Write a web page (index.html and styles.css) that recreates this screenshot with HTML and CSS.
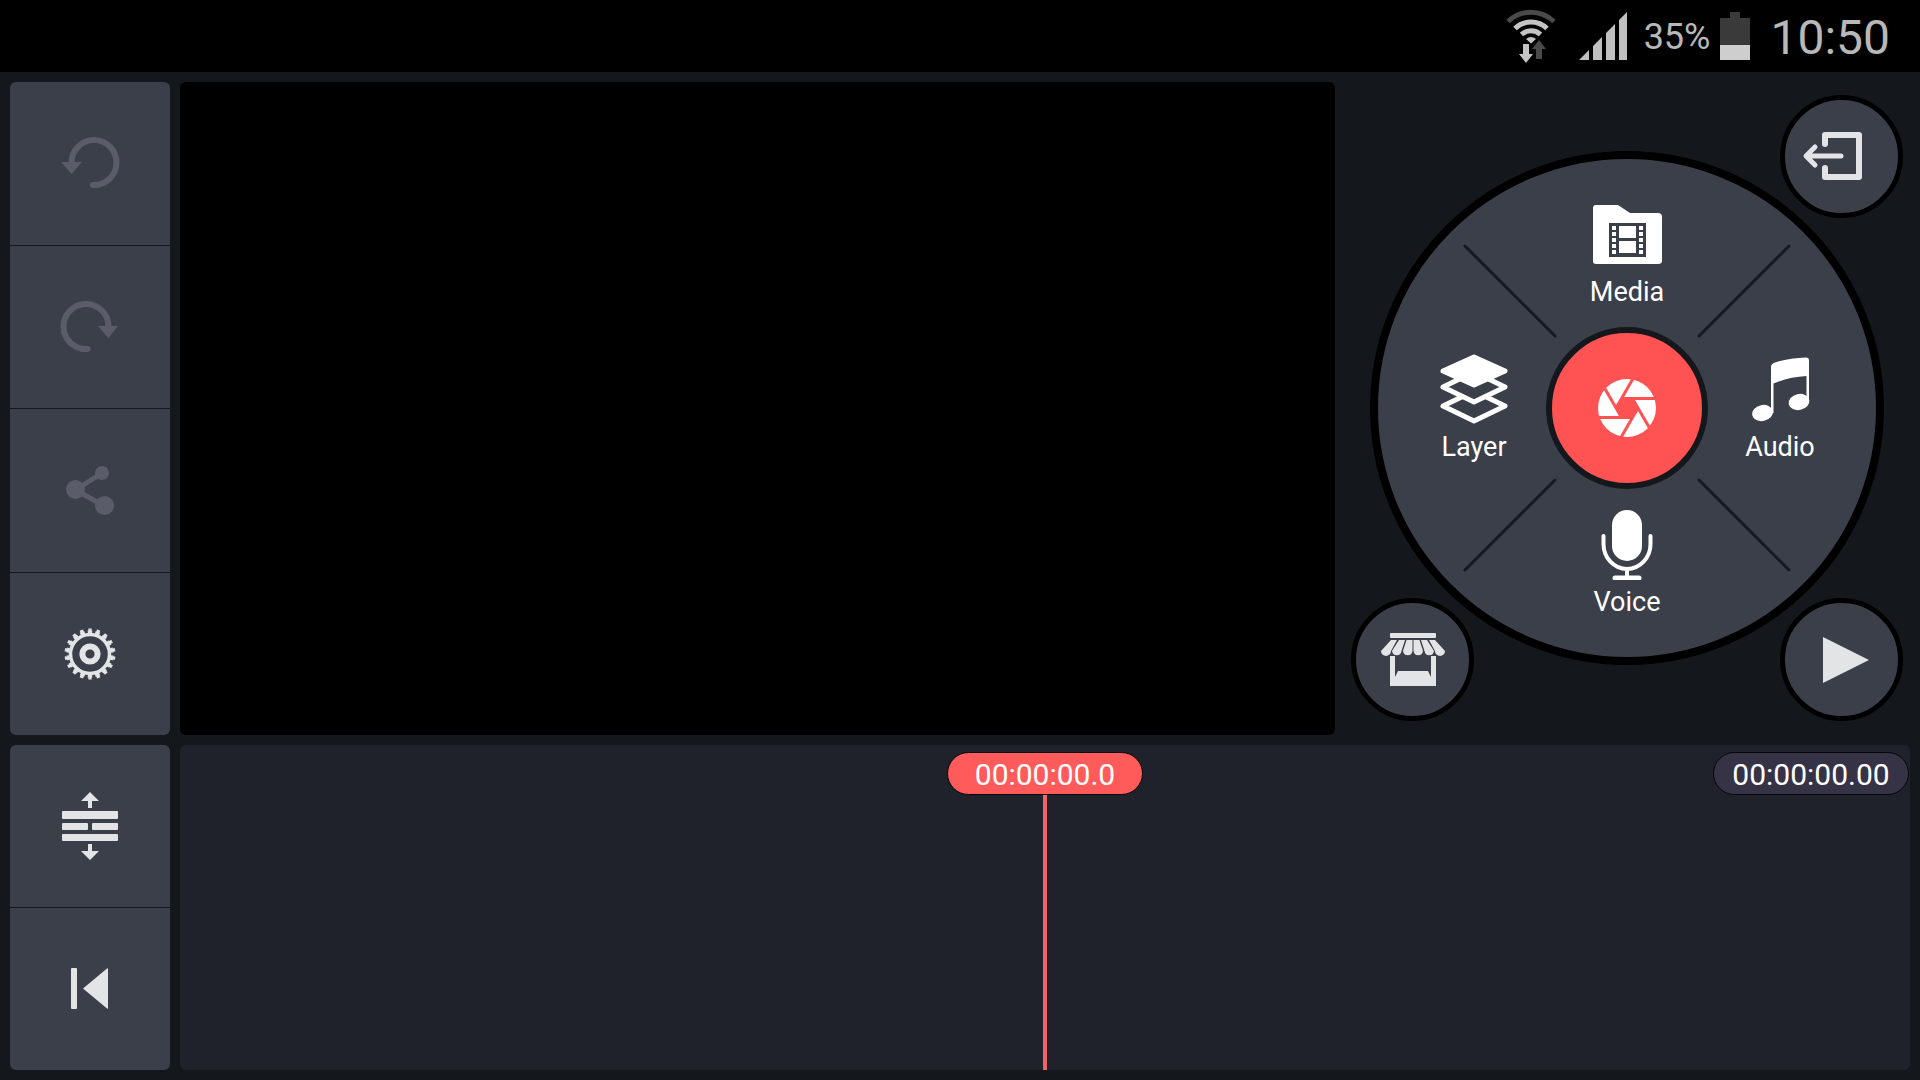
FILE: index.html
```html
<!DOCTYPE html>
<html lang="en">
<head>
  <meta charset="UTF-8">
  <meta name="viewport" content="width=device-width, initial-scale=1.0">
  <title>Video Editor</title>
  <link rel="stylesheet" href="styles.css">
</head>
<body>
  <header class="status-bar">
    <svg class="wifi" width="50" height="54" viewBox="0 0 50 54" fill="none" stroke-width="5">
      <path d="M2 12.5A33 33 0 0 1 48 12.5" stroke="#4a4a4a"/>
      <path d="M9 19.5A23 23 0 0 1 41 19.5M15.5 25.5A14 14 0 0 1 34.5 25.5" stroke="#c4c4c4"/>
      <path d="M20 30Q25 26 30 30L25 34.5ZM17 35H23V45H27L20 54L13 45H17Z" fill="#c4c4c4"/>
      <path d="M33 31L40 40H36V50H30V40H26Z" fill="#4a4a4a"/>
    </svg>
    <svg class="signal" width="48" height="48" viewBox="0 0 48 48" fill="#c0c0c0">
      <path d="M0 48L10 38V48ZM14 34L23 25V48H14ZM27 21L36 12V48H27ZM40 8L48 0V48H40Z"/>
    </svg>
    <span class="battery-level">35%</span>
    <svg class="battery" width="30" height="48" viewBox="0 0 30 48">
      <path d="M10 0H20V6H30V33H0V6H10Z" fill="#3a3a3a"/>
      <path d="M0 33H30V48H0Z" fill="#cecece"/>
    </svg>
    <time class="clock">10:50</time>
  </header>

  <main class="editor">
    <nav class="tools" aria-label="Project">
      <button class="tool" aria-label="Undo" disabled>
        <svg width="60" height="60" viewBox="0 0 60 60">
          <path d="M33 52A22.5 22.5 0 1 0 11.5 30" fill="none" stroke="currentColor" stroke-width="6" stroke-linecap="round"/>
          <path d="M1 29H22L11.5 41Z" fill="currentColor"/>
        </svg>
      </button>
      <button class="tool" aria-label="Redo" disabled>
        <svg width="60" height="60" viewBox="0 0 60 60">
          <path d="M27.5 52A22.5 22.5 0 1 1 48.5 30" fill="none" stroke="currentColor" stroke-width="6" stroke-linecap="round"/>
          <path d="M38 29H58L48.5 41Z" fill="currentColor"/>
        </svg>
      </button>
      <button class="tool" aria-label="Share" disabled>
        <svg width="60" height="60" viewBox="0 0 60 60" fill="currentColor">
          <path d="M42 13L15.5 30L44.5 46" fill="none" stroke="currentColor" stroke-width="5"/>
          <circle cx="42" cy="13" r="7"/>
          <circle cx="15.5" cy="29.5" r="9.5"/>
          <circle cx="44.5" cy="45.5" r="9.5"/>
        </svg>
      </button>
      <button class="tool" aria-label="Settings">
        <svg width="60" height="60" viewBox="0 0 60 60" fill="none" stroke="currentColor">
          <circle cx="30" cy="30" r="19.5" stroke-width="3.5"/>
          <circle cx="30" cy="30" r="7.6" stroke-width="6"/>
          <circle cx="30" cy="30" r="22" stroke-width="3" pathLength="180" stroke-dasharray="6 4" stroke-dashoffset="3" transform="rotate(-90 30 30)"/>
          <circle cx="30" cy="30" r="23.5" stroke-width="4" pathLength="180" stroke-dasharray="4 6" stroke-dashoffset="2" transform="rotate(-90 30 30)"/>
        </svg>
      </button>
    </nav>

    <section class="preview" aria-label="Preview"></section>

    <section class="controls" aria-label="Controls">
      <div class="wheel">
        <svg class="wheel-lines" viewBox="0 0 498 498" stroke="#141923" stroke-width="3" stroke-linecap="round">
          <path d="M87 87L177 177M411 87L321 177M87 411L177 321M411 411L321 321"/>
        </svg>
        <button class="sector media">
          <svg width="72" height="72" viewBox="0 0 72 72" fill="#fff">
            <path d="M5 7H27L39 15H67Q71 15 71 19V63Q71 66 67 66H5Q2 66 2 63V10Q2 7 5 7Z"/>
            <path d="M18 25H55V59H18Z" fill="#3b3f4a"/>
            <path d="M28 28H45V40H28ZM28 43H45V55H28Z"/>
            <path d="M23 28V56M50 28V56" stroke="#fff" stroke-width="4" stroke-dasharray="4 2"/>
          </svg>
          Media
        </button>
        <button class="sector layer">
          <svg width="72" height="72" viewBox="0 0 72 72" fill="#3b3f4a" stroke="#fff" stroke-width="5" stroke-linejoin="round">
            <path d="M36 38L67 53L36 68L5 53Z"/>
            <path d="M36 19L67 34L36 49L5 34Z"/>
            <path d="M36 4L67 18L36 32L5 18Z" fill="#fff"/>
          </svg>
          Layer
        </button>
        <button class="capture" aria-label="Capture">
          <svg width="60" height="60" viewBox="-30 -30 60 60" fill="#ff5252" stroke="#ff5252" stroke-width="3">
            <circle r="29" fill="#fff" stroke="none"/>
            <path d="M-11 0L-5.5 -9.5H5.5L11 0L5.5 9.5H-5.5Z" stroke="none"/>
            <path id="blade" d="M-5.5 -9.5H30"/>
            <use href="#blade" transform="rotate(60)"/>
            <use href="#blade" transform="rotate(120)"/>
            <use href="#blade" transform="rotate(180)"/>
            <use href="#blade" transform="rotate(240)"/>
            <use href="#blade" transform="rotate(300)"/>
          </svg>
        </button>
        <button class="sector audio">
          <svg width="72" height="72" viewBox="0 0 72 72" fill="#fff">
            <path d="M27 14Q27 10.5 31 9.5Q45 5 62 4.5Q65 4.5 65 7.5V49H62.5V23Q45 24 29.5 30.5V60H27Z"/>
            <ellipse cx="55" cy="49" rx="10.5" ry="8" transform="rotate(-12 55 49)"/>
            <ellipse cx="18.5" cy="60" rx="10.5" ry="8" transform="rotate(-12 18.5 60)"/>
          </svg>
          Audio
        </button>
        <button class="sector voice">
          <svg width="72" height="72" viewBox="0 0 72 72" fill="none" stroke="#fff" stroke-width="4" stroke-linecap="round">
            <rect x="21" y="2" width="30" height="51" rx="15" fill="#fff" stroke="none"/>
            <path d="M12.5 28V36A23.5 25 0 0 0 59.5 36V28M36 61V70"/>
            <path d="M24 70H48" stroke-width="5"/>
          </svg>
          Voice
        </button>
      </div>
      <button class="round exit" aria-label="Exit project">
        <svg width="80" height="64" viewBox="0 0 80 64" fill="none" stroke="currentColor" stroke-width="6" stroke-linecap="round" stroke-linejoin="round">
          <path d="M25 19V10H59V52H25V43"/>
          <path d="M41 31H7M15 22L6 31L15 40" stroke-width="5"/>
        </svg>
      </button>
      <button class="round store" aria-label="Asset store">
        <svg width="66" height="54" viewBox="0 0 66 54" fill="currentColor">
          <rect x="10" y="0" width="46" height="5" rx="1"/>
          <path d="M11 7H17L11 18A5 5 0 0 1 1 18Z"/>
          <path d="M19 7H25L21.5 18A4.8 5 0 0 1 12 18Z"/>
          <path d="M26.5 7H32.5V18A4.8 5 0 0 1 23 18Z"/>
          <path d="M33.5 7H39.5L43 18A4.8 5 0 0 1 33.5 18Z"/>
          <path d="M41 7H47L54 18A4.8 5 0 0 1 44.5 18Z"/>
          <path d="M49 7H55L65 18A5 5 0 0 1 55 18Z"/>
          <path d="M10 23H15V44L18 38H48L51 44V23H56V53H10Z"/>
        </svg>
      </button>
      <button class="round play" aria-label="Play">
        <svg width="64" height="64" viewBox="0 0 64 64" fill="currentColor">
          <path d="M13 9L59 32L13 55Z"/>
        </svg>
      </button>
    </section>

    <nav class="tools" aria-label="Timeline tools">
      <button class="tool" aria-label="Expand timeline">
        <svg width="60" height="70" viewBox="0 0 60 70" fill="currentColor">
          <path d="M30 1L39 10H32V17H28V10H21Z"/>
          <rect x="2" y="20" width="56" height="8" rx="1"/>
          <rect x="2" y="32" width="26" height="7" rx="1"/>
          <rect x="32" y="32" width="26" height="7" rx="1"/>
          <rect x="2" y="43" width="56" height="7" rx="1"/>
          <path d="M30 69L39 60H32V53H28V60H21Z"/>
        </svg>
      </button>
      <button class="tool" aria-label="Jump to start">
        <svg width="60" height="60" viewBox="0 0 60 60" fill="currentColor">
          <rect x="11" y="9" width="6" height="41" rx="1"/>
          <path d="M23 29.5L47 9.5Q48 9 48 10V49Q48 50 47 49.5Z"/>
        </svg>
      </button>
    </nav>

    <section class="timeline" aria-label="Timeline">
      <div class="playhead">
        <time class="time-pill current">00:00:00.0</time>
      </div>
      <time class="time-pill total">00:00:00.00</time>
    </section>
  </main>
</body>
</html>
```
FILE: styles.css
```css
* {
  box-sizing: border-box;
}

body {
  display: flex;
  flex-direction: column;
  min-height: 100vh;
  margin: 0;
  background: #14181c;
  color: #fff;
  font-family: Roboto, sans-serif;
}

button {
  display: flex;
  align-items: center;
  justify-content: center;
  margin: 0;
  padding: 0;
  border: 0;
  background: #3b3f4a;
  color: #e2e4e6;
  font: inherit;
  cursor: pointer;
}

svg {
  display: block;
  flex: none;
}

/* status bar */
.status-bar {
  display: flex;
  align-items: center;
  justify-content: flex-end;
  height: 72px;
  padding-right: 30px;
  background: #000;
  color: #b8b8b8;
}

.wifi,
.signal,
.battery {
  margin-bottom: 1px;
}

.signal {
  margin-left: 23px;
}

.battery-level {
  margin-left: 17px;
  padding-top: 2px;
  font-size: 36px;
}

.battery {
  margin-left: 10px;
}

.clock {
  margin-left: 20px;
  padding-top: 2px;
  font-size: 48px;
}

/* main grid */
.editor {
  flex: 1;
  display: grid;
  grid-template-columns: 160px 1fr 565px;
  grid-template-rows: 201fr 100fr;
  gap: 10px;
  padding: 10px;
}

.tools {
  display: flex;
  flex-direction: column;
  gap: 1px;
  border-radius: 6px;
  overflow: hidden;
}

.tool {
  flex: 1;
}

.tool:disabled {
  color: #5a5d69;
  cursor: default;
}

.preview {
  border-radius: 6px;
  background: #000;
}

/* control wheel */
.controls {
  display: grid;
  grid-template-columns: 1fr 1fr;
  grid-template-rows: 1fr 1fr;
  padding: 13px 7px 14px 6px;
}

.wheel {
  grid-area: 1 / 1 / -1 / -1;
  place-self: center;
  position: relative;
  display: grid;
  grid-template-columns: 144px 162px 144px;
  grid-template-rows: 148px 162px 148px;
  place-content: center;
  width: 514px;
  height: 514px;
  border: 8px solid #000;
  border-radius: 50%;
  background: #3b3f4a;
}

.wheel-lines {
  position: absolute;
  inset: 0;
}

.sector {
  position: relative;
  flex-direction: column;
  gap: 6px;
  background: none;
  color: #fff;
  font-size: 27px;
  line-height: 32px;
}

.media {
  grid-area: 1 / 2;
}

.layer {
  grid-area: 2 / 1;
}

.capture {
  grid-area: 2 / 2;
  position: relative;
  border: 6px solid #14181c;
  border-radius: 50%;
  background: #ff5252;
}

.audio {
  grid-area: 2 / 3;
}

.voice {
  grid-area: 3 / 2;
}

.round {
  width: 123px;
  height: 123px;
  border: 5px solid #000;
  border-radius: 50%;
}

.exit {
  grid-area: 1 / 2;
  place-self: start end;
  padding-right: 4px;
}

.store {
  grid-area: 2 / 1;
  place-self: end start;
}

.play {
  grid-area: 2 / 2;
  place-self: end end;
}

/* timeline */
.timeline {
  grid-column: 2 / -1;
  position: relative;
  display: flex;
  justify-content: center;
  padding-top: 7px;
  border-radius: 6px;
  background: #1f222b;
}

.playhead {
  display: flex;
  flex-direction: column;
  align-items: center;
}

.playhead::after {
  content: "";
  flex: 1;
  width: 4px;
  background: #f26468;
}

.time-pill {
  width: 196px;
  height: 43px;
  border: 1px solid #05060a;
  border-radius: 22px;
  font-size: 30px;
  line-height: 43px;
  text-align: center;
}

.current {
  background: #ff5b5b;
}

.total {
  position: absolute;
  top: 7px;
  right: 1px;
  background: #373347;
}
```
